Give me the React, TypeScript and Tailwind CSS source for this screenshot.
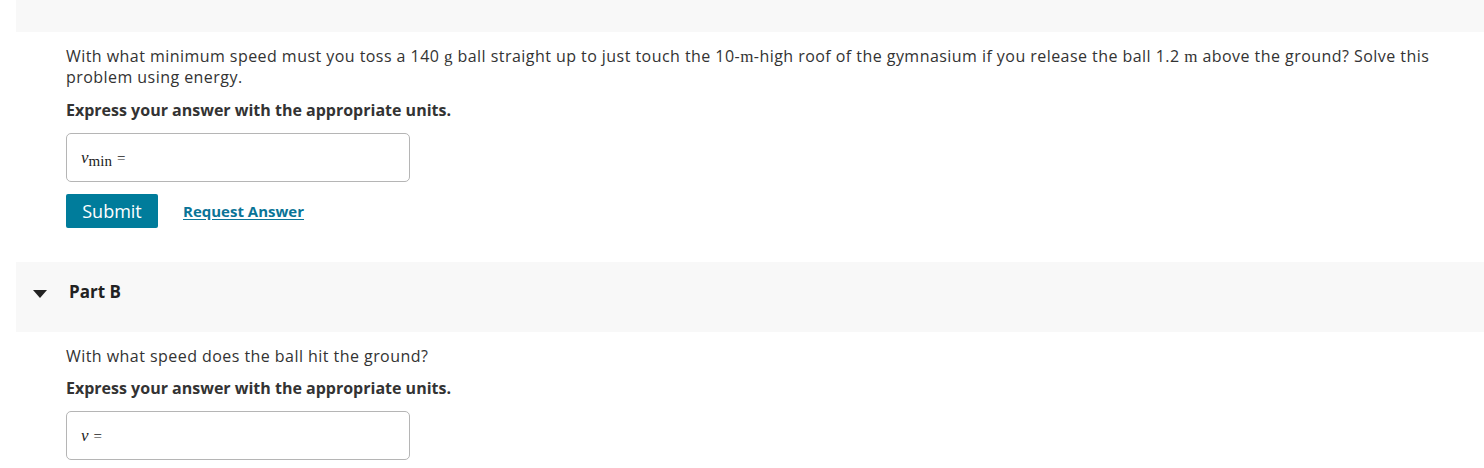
import React from 'react';

const body = "font-['Open_Sans',sans-serif]";
const mathFont = "font-['Liberation_Serif','DejaVu_Serif',serif]";

function Unit({ children }: { children: React.ReactNode }) {
  return <span className={`${mathFont} text-[17px] leading-none`}>{children}</span>;
}

function AnswerBox({ label, sub }: { label: string; sub?: string }) {
  return (
    <div className="flex h-[49px] w-[344px] items-center rounded-[5px] border border-[#b5b5b5] bg-white pl-[14px]">
      <span className={`${mathFont} text-[17px] leading-none text-[#222]`}>
        <i>{label}</i>
        {sub && <span className="relative top-[3px] text-[15px]">{sub}</span>}
        <span className="ml-[5px] text-[15px]">=</span>
      </span>
    </div>
  );
}

export default function App() {
  return (
    <div className={`${body} min-h-[468px] bg-white text-[#333]`}>
      <div className="ml-4 h-8 bg-[#f8f8f8]" />

      <div className="pl-[66px] pr-[40px] pt-[14px]">
        <p className="max-w-[1378px] text-[16px] leading-[21px] tracking-[0.45px]">
          With what minimum speed must you toss a 140 <Unit>g</Unit> ball straight up to just touch the 10-<Unit>m</Unit>-high roof of the gymnasium if you release the ball 1.2 <Unit>m</Unit> above the ground? Solve this problem using energy.
        </p>
        <p className="mt-[12px] text-[16px] font-bold leading-[21px]">Express your answer with the appropriate units.</p>

        <div className="mt-[12px]">
          <AnswerBox label="v" sub="min" />
        </div>

        <div className="mt-[12px] flex items-center gap-[25px]">
          <button className="h-[34px] w-[92px] rounded-[2px] bg-[#007c9b] text-[18px] text-white">Submit</button>
          <a className="text-[15px] font-bold text-[#0a7497] underline underline-offset-2">Request Answer</a>
        </div>
      </div>

      <div className="ml-4 mt-[34px] flex h-[70px] items-start bg-[#f8f8f8] pt-[18px]">
        <svg width="14" height="8" viewBox="0 0 14 8" className="ml-[17px] mt-[10px]">
          <polygon points="0,0 14,0 7,8" fill="#222" />
        </svg>
        <span className="ml-[22px] text-[17px] font-bold leading-[24px] text-[#222]">Part B</span>
      </div>

      <div className="pl-[66px] pt-[14px]">
        <p className="text-[16px] leading-[21px] tracking-[0.45px]">With what speed does the ball hit the ground?</p>
        <p className="mt-[11px] text-[16px] font-bold leading-[21px]">Express your answer with the appropriate units.</p>
        <div className="mt-[12px]">
          <AnswerBox label="v" />
        </div>
      </div>
    </div>
  );
}
